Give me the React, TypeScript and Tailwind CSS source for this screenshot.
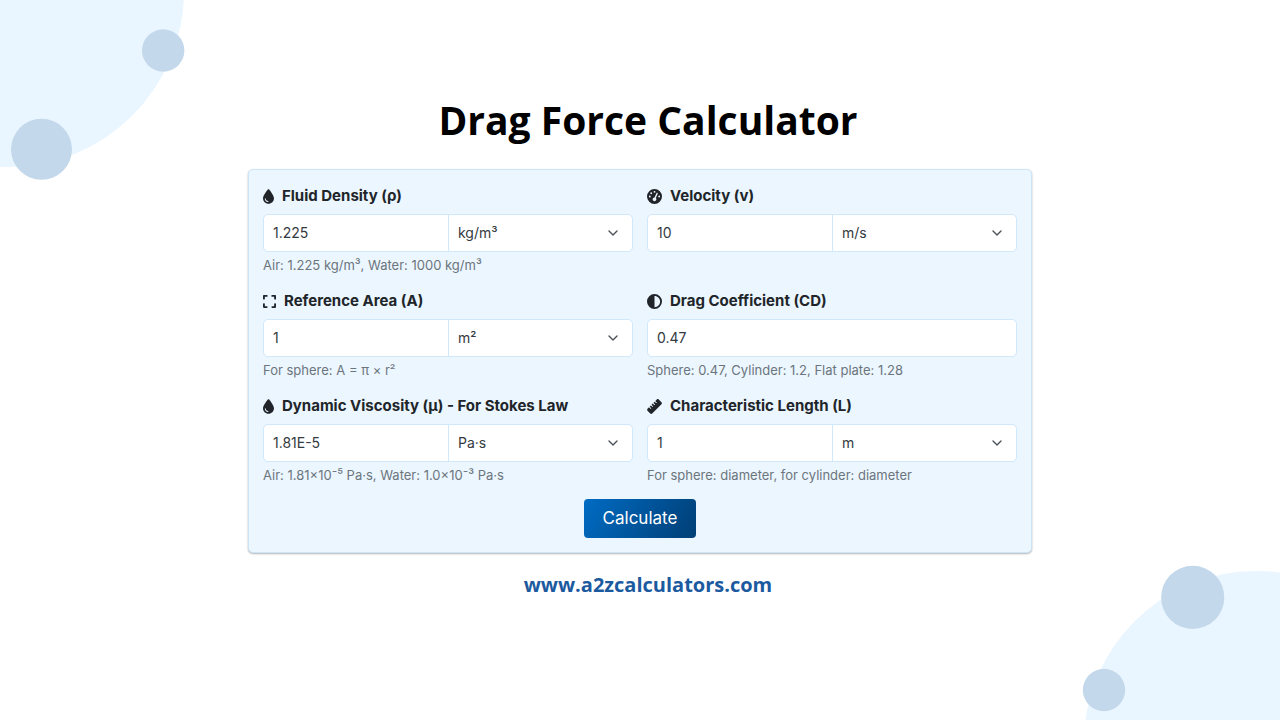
import { useState } from 'react';
import type { ComponentType } from 'react';
import { ChevronDown } from 'lucide-react';
import { FaDroplet, FaGaugeHigh, FaExpand, FaCircleHalfStroke, FaRuler } from 'react-icons/fa6';

interface Field {
  id: string;
  label: string;
  icon: ComponentType<{ className?: string }>;
  iconClass: string;
  value: string;
  units?: string[];
  hint?: string;
}

const fields: Field[] = [
  { id: 'density', label: 'Fluid Density (ρ)', icon: FaDroplet, iconClass: 'w-[11px]', value: '1.225', units: ['kg/m³', 'g/cm³', 'lb/ft³'], hint: 'Air: 1.225 kg/m³, Water: 1000 kg/m³' },
  { id: 'velocity', label: 'Velocity (v)', icon: FaGaugeHigh, iconClass: 'w-[15px]', value: '10', units: ['m/s', 'km/h', 'mph'] },
  { id: 'area', label: 'Reference Area (A)', icon: FaExpand, iconClass: 'w-[13px]', value: '1', units: ['m²', 'cm²', 'ft²'], hint: 'For sphere: A = π × r²' },
  { id: 'coefficient', label: 'Drag Coefficient (CD)', icon: FaCircleHalfStroke, iconClass: 'w-[15px]', value: '0.47', hint: 'Sphere: 0.47, Cylinder: 1.2, Flat plate: 1.28' },
  { id: 'viscosity', label: 'Dynamic Viscosity (μ) - For Stokes Law', icon: FaDroplet, iconClass: 'w-[11px]', value: '1.81E-5', units: ['Pa·s', 'cP'], hint: 'Air: 1.81×10⁻⁵ Pa·s, Water: 1.0×10⁻³ Pa·s' },
  { id: 'length', label: 'Characteristic Length (L)', icon: FaRuler, iconClass: 'w-[15px]', value: '1', units: ['m', 'cm', 'ft'], hint: 'For sphere: diameter, for cylinder: diameter' },
];

function CalculatorField({ field }: { field: Field }) {
  const [value, setValue] = useState(field.value);
  const [unit, setUnit] = useState(field.units ? field.units[0] : '');
  const Icon = field.icon;

  return (
    <div>
      <label htmlFor={field.id} className="flex items-center gap-2 mb-1.5 text-[15px] leading-6 font-bold text-[#212529]">
        <Icon className={`h-[15px] shrink-0 ${field.iconClass}`} />
        {field.label}
      </label>
      <div className="grid auto-cols-fr grid-flow-col h-[38px] rounded-[5px] border border-[#cfe8fc] bg-white text-sm text-[#343a40] overflow-hidden">
        <input
          id={field.id}
          type="text"
          value={value}
          onChange={(e) => setValue(e.target.value)}
          className="min-w-0 px-[9px] bg-transparent focus:outline-none"
        />
        {field.units && (
          <div className="grid items-center min-w-0 border-l border-[#cfe8fc]">
            <select
              aria-label={`${field.label} unit`}
              value={unit}
              onChange={(e) => setUnit(e.target.value)}
              className="col-start-1 row-start-1 w-full h-full pl-[9px] pr-8 appearance-none bg-transparent focus:outline-none"
            >
              {field.units.map((u) => (
                <option key={u}>{u}</option>
              ))}
            </select>
            <ChevronDown size={16} className="col-start-1 row-start-1 justify-self-end mr-[11px] text-[#495057] pointer-events-none" />
          </div>
        )}
      </div>
      {field.hint && <p className="mt-[3px] text-[13px] leading-5 text-[#6c757d]">{field.hint}</p>}
    </div>
  );
}

function CornerBubbles() {
  return (
    <>
      <svg className="absolute left-0 top-0" width="220" height="190" aria-hidden="true">
        <circle cx="8" cy="-9" r="176" fill="#eaf6ff" />
        <circle cx="163.2" cy="50.5" r="21.2" fill="#c3d8eb" />
        <circle cx="41.5" cy="149.3" r="30.5" fill="#c3d8eb" />
      </svg>
      <svg className="absolute right-0 bottom-0" width="220" height="170" aria-hidden="true">
        <circle cx="196" cy="193" r="172" fill="#eaf6ff" />
        <circle cx="132.7" cy="47.4" r="31.6" fill="#c3d8eb" />
        <circle cx="44" cy="140" r="21.2" fill="#c3d8eb" />
      </svg>
    </>
  );
}

export default function App() {
  return (
    <div className="relative min-h-screen overflow-hidden bg-white font-['Inter',sans-serif]">
      <CornerBubbles />

      <main className="relative mx-auto max-w-[784px] pt-24">
        <h1 className="mb-[25px] pl-4 text-center font-['Open_Sans',sans-serif] text-[39px] leading-12 font-bold text-black">
          Drag Force Calculator
        </h1>

        <form
          onSubmit={(e) => e.preventDefault()}
          className="p-3.5 rounded-[5px] border border-[#cde5f8] bg-[#ebf6ff] shadow-[0_1px_2px_rgba(0,0,0,0.3)]"
        >
          <div className="grid grid-cols-2 gap-3.5">
            {fields.map((field) => (
              <CalculatorField key={field.id} field={field} />
            ))}
          </div>
          <div className="mt-3.5 flex justify-center">
            <button type="submit" className="h-[39px] px-[19px] rounded-[4px] bg-linear-120 from-[#006cc4] to-[#003f76] text-[17px] text-white">
              Calculate
            </button>
          </div>
        </form>

        <p className="mt-4 pl-4 text-center font-['Open_Sans',sans-serif] text-xl leading-8 font-bold text-[#1c5a9f]">
          <a href="https://www.a2zcalculators.com">www.a2zcalculators.com</a>
        </p>
      </main>
    </div>
  );
}
